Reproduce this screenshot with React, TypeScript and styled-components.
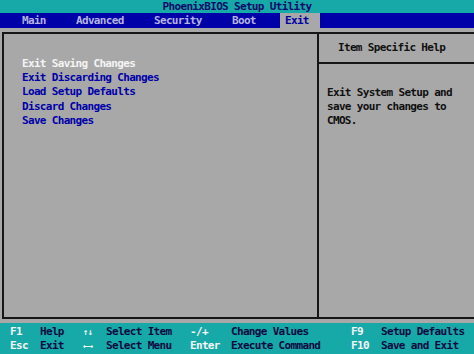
import React from "react"
import styled, { createGlobalStyle } from "styled-components"

const GlobalStyle = createGlobalStyle`
    html, body {
        margin: 0;
        padding: 0;
        background: #a8a8a8;
    }
    body {
        font-family: "DejaVu Sans Mono", "Liberation Mono", monospace;
        font-weight: 700;
        font-size: 11px;
        letter-spacing: -0.67px;
    }
`

const MENU = [
    { label: "Main", width: 54 },
    { label: "Advanced", width: 78 },
    { label: "Security", width: 78 },
    { label: "Boot", width: 53 },
    { label: "Exit", width: 40, active: true },
]

const ITEMS = [
    "Exit Saving Changes",
    "Exit Discarding Changes",
    "Load Setup Defaults",
    "Discard Changes",
    "Save Changes",
]

const HELP = ["Exit System Setup and", "save your changes to", "CMOS."]

const KEYS: [string, string, string, string, string, string, string, string][] = [
    ["F1", "Help", "↑↓", "Select Item", "-/+", "Change Values", "F9", "Setup Defaults"],
    ["Esc", "Exit", "←→", "Select Menu", "Enter", "Execute Command", "F10", "Save and Exit"],
]

const App: React.FC = (): JSX.Element => {
    return (
        <>
            <GlobalStyle />
            <Screen>
                <TitleBar>PhoenixBIOS Setup Utility</TitleBar>
                <MenuBar>
                    {MENU.map(m => (
                        <MenuItem key={m.label} $width={m.width} $active={!!m.active}>{m.label}</MenuItem>
                    ))}
                </MenuBar>

                <Body>
                    <Frame>
                        <LeftPanel>
                            {ITEMS.map((item, i) => (
                                <Option key={item} $selected={i === 0}>{item}</Option>
                            ))}
                        </LeftPanel>
                        <HelpPanel>
                            <HelpTitle>Item Specific Help</HelpTitle>
                            <HelpText>
                                {HELP.map(line => <Line key={line}>{line}</Line>)}
                            </HelpText>
                        </HelpPanel>
                    </Frame>
                </Body>

                <Footer>
                    {KEYS.map(row => row.map((cell, i) => (
                        i % 2 === 0
                            ? <Key key={row[0] + i} $arrow={i === 2}>{cell}</Key>
                            : <Desc key={row[0] + i}>{cell}</Desc>
                    )))}
                </Footer>
            </Screen>
        </>
    )
}

export default App

const Screen = styled.div`
    width: 474px;
    height: 354px;
    display: flex;
    flex-direction: column;
    background: #a8a8a8;
    overflow: hidden;
`

const TitleBar = styled.div`
    height: 13px;
    line-height: 13px;
    background: #17a8a8;
    color: #0a0a6a;
    text-align: center;
`

const MenuBar = styled.div`
    height: 15px;
    background: #0000a8;
    display: flex;
    padding-left: 17px;
`

const MenuItem = styled.div<{ $width: number, $active: boolean }>`
    width: ${p => p.$width}px;
    padding-left: 5px;
    box-sizing: border-box;
    line-height: 15px;
    color: ${p => p.$active ? "#0000a8" : "#b4b4e0"};
    background: ${p => p.$active ? "#a8a8a8" : "transparent"};
`

const Body = styled.div`
    flex: 1;
    padding: 4px 0 4px 2px;
    display: flex;
`

const Frame = styled.div`
    flex: 1;
    display: grid;
    grid-template-columns: 315px 1fr;
    border-top: 2px solid #161616;
    border-left: 2px solid #161616;
    border-bottom: 2px solid #161616;
`

const LeftPanel = styled.div`
    border-right: 2px solid #161616;
    padding: 23px 0 0 18px;
`

const Option = styled.div<{ $selected: boolean }>`
    height: 14.2px;
    line-height: 14.2px;
    color: ${p => p.$selected ? "#f4f4f4" : "#0000a8"};
`

const HelpPanel = styled.div`
    display: flex;
    flex-direction: column;
`

const HelpTitle = styled.div`
    height: 28px;
    line-height: 28px;
    padding-left: 19px;
    color: #101010;
    border-bottom: 2px solid #161616;
`

const HelpText = styled.div`
    padding: 22px 0 0 8px;
    color: #101010;
`

const Line = styled.div`
    height: 14.2px;
    line-height: 14.2px;
`

const Footer = styled.div`
    height: 31px;
    box-sizing: border-box;
    background: #17a8a8;
    padding: 2px 0 0 10px;
    display: grid;
    grid-template-columns: 30px 43px 23px 84px 41px 120px 30px 1fr;
    grid-auto-rows: 14.2px;
    line-height: 14.2px;
    white-space: nowrap;
`

const Key = styled.div<{ $arrow: boolean }>`
    color: #f4f4f4;
    font-size: ${p => p.$arrow ? "9px" : "11px"};
`

const Desc = styled.div`
    color: #0a0a40;
`
